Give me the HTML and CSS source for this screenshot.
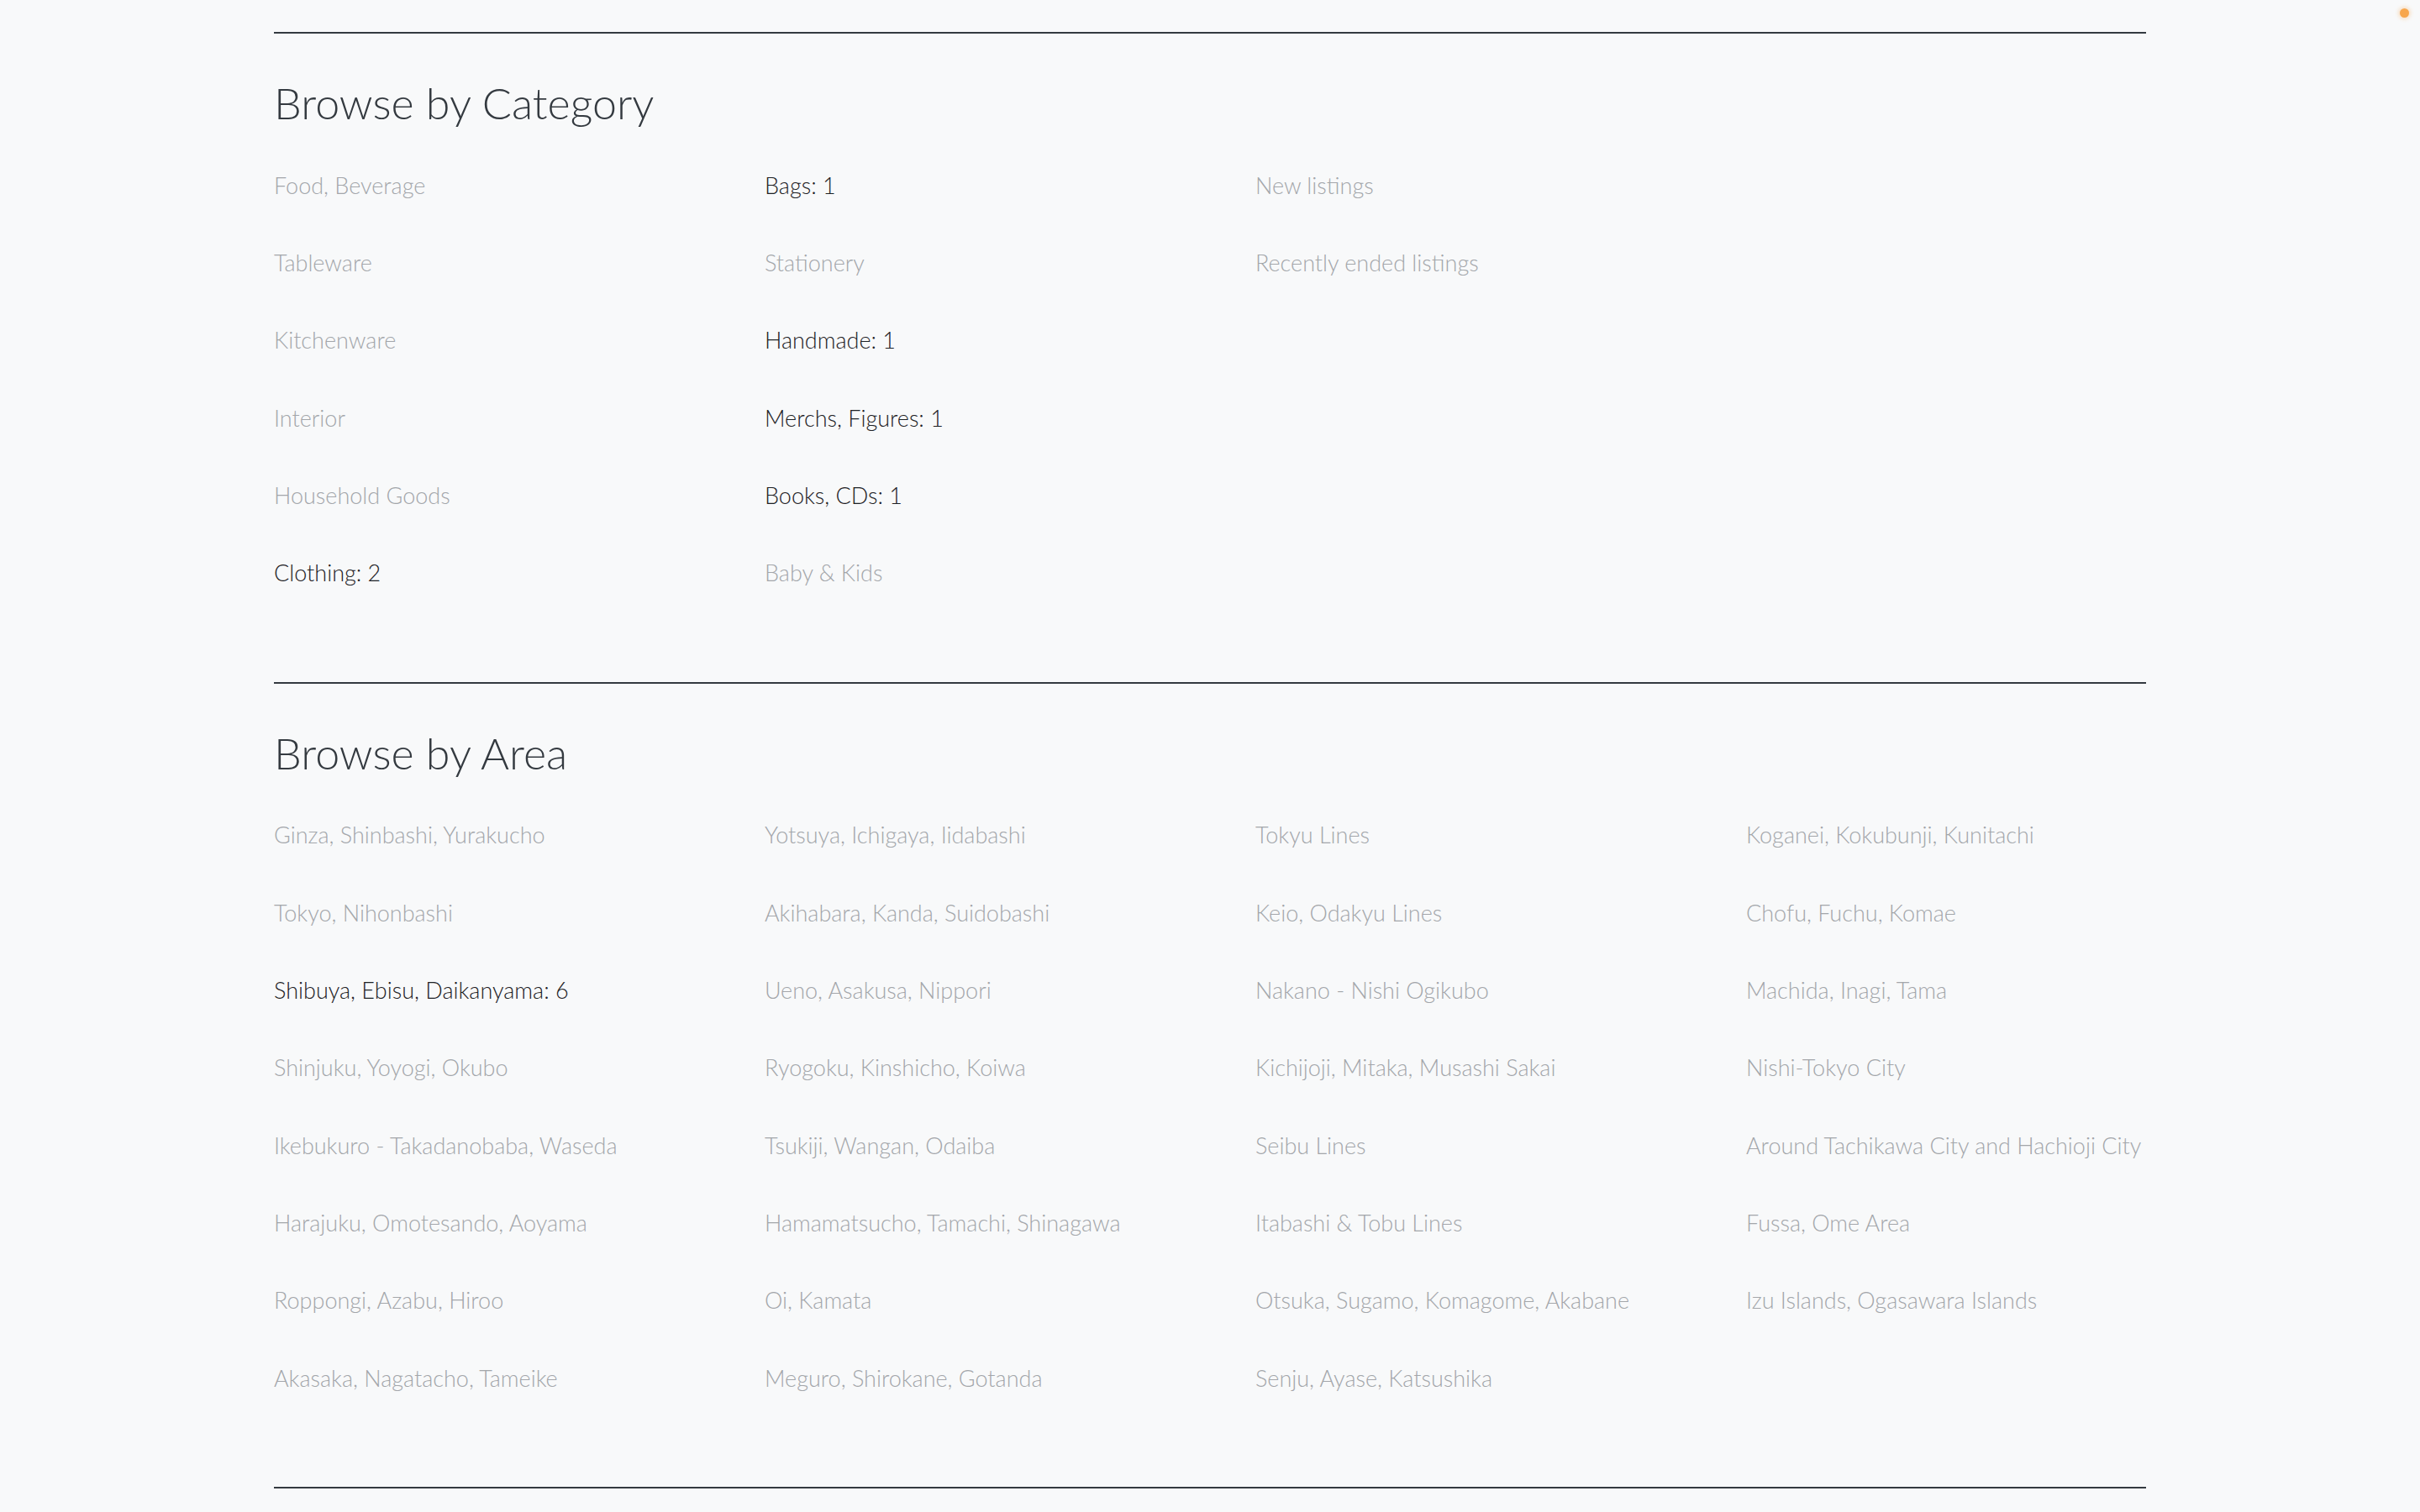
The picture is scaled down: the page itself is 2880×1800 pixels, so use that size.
FILE: index.html
```html
<!DOCTYPE html>
<html lang="en">
<head>
  <meta charset="UTF-8" />
  <meta name="viewport" content="width=device-width, initial-scale=1" />
  <title>Browse</title>
  <link rel="stylesheet" href="styles.css">
</head>
<body>
  <span class="status-dot"></span>
  <div class="container">

    <section class="browse">
      <h2>Browse by Category</h2>
      <div class="browse-grid">
        <ul>
          <li><a href="#">Food, Beverage</a></li>
          <li><a href="#">Tableware</a></li>
          <li><a href="#">Kitchenware</a></li>
          <li><a href="#">Interior</a></li>
          <li><a href="#">Household Goods</a></li>
          <li><a href="#" class="has-items">Clothing: 2</a></li>
        </ul>
        <ul>
          <li><a href="#" class="has-items">Bags: 1</a></li>
          <li><a href="#">Stationery</a></li>
          <li><a href="#" class="has-items">Handmade: 1</a></li>
          <li><a href="#" class="has-items">Merchs, Figures: 1</a></li>
          <li><a href="#" class="has-items">Books, CDs: 1</a></li>
          <li><a href="#">Baby &amp; Kids</a></li>
        </ul>
        <ul>
          <li><a href="#">New listings</a></li>
          <li><a href="#">Recently ended listings</a></li>
        </ul>
      </div>
    </section>

    <section class="browse">
      <h2>Browse by Area</h2>
      <div class="browse-grid">
        <ul>
          <li><a href="#">Ginza, Shinbashi, Yurakucho</a></li>
          <li><a href="#">Tokyo, Nihonbashi</a></li>
          <li><a href="#" class="has-items">Shibuya, Ebisu, Daikanyama: 6</a></li>
          <li><a href="#">Shinjuku, Yoyogi, Okubo</a></li>
          <li><a href="#">Ikebukuro - Takadanobaba, Waseda</a></li>
          <li><a href="#">Harajuku, Omotesando, Aoyama</a></li>
          <li><a href="#">Roppongi, Azabu, Hiroo</a></li>
          <li><a href="#">Akasaka, Nagatacho, Tameike</a></li>
        </ul>
        <ul>
          <li><a href="#">Yotsuya, Ichigaya, Iidabashi</a></li>
          <li><a href="#">Akihabara, Kanda, Suidobashi</a></li>
          <li><a href="#">Ueno, Asakusa, Nippori</a></li>
          <li><a href="#">Ryogoku, Kinshicho, Koiwa</a></li>
          <li><a href="#">Tsukiji, Wangan, Odaiba</a></li>
          <li><a href="#">Hamamatsucho, Tamachi, Shinagawa</a></li>
          <li><a href="#">Oi, Kamata</a></li>
          <li><a href="#">Meguro, Shirokane, Gotanda</a></li>
        </ul>
        <ul>
          <li><a href="#">Tokyu Lines</a></li>
          <li><a href="#">Keio, Odakyu Lines</a></li>
          <li><a href="#">Nakano - Nishi Ogikubo</a></li>
          <li><a href="#">Kichijoji, Mitaka, Musashi Sakai</a></li>
          <li><a href="#">Seibu Lines</a></li>
          <li><a href="#">Itabashi &amp; Tobu Lines</a></li>
          <li><a href="#">Otsuka, Sugamo, Komagome, Akabane</a></li>
          <li><a href="#">Senju, Ayase, Katsushika</a></li>
        </ul>
        <ul>
          <li><a href="#">Koganei, Kokubunji, Kunitachi</a></li>
          <li><a href="#">Chofu, Fuchu, Komae</a></li>
          <li><a href="#">Machida, Inagi, Tama</a></li>
          <li><a href="#">Nishi-Tokyo City</a></li>
          <li><a href="#">Around Tachikawa City and Hachioji City</a></li>
          <li><a href="#">Fussa, Ome Area</a></li>
          <li><a href="#">Izu Islands, Ogasawara Islands</a></li>
        </ul>
      </div>
    </section>

    <section class="browse"></section>
  </div>
</body>
</html>
```

FILE: styles.css
```css
body {
  margin: 0;
  padding: 38px 0 0;
  background-color: #f8f9fa;
  font-family: Lato, 'Open Sans', sans-serif;
  font-weight: 300;
  color: #343a40;
}

.container {
  width: 2228px;
  margin: 0 auto;
}

.status-dot {
  position: fixed;
  top: 10px;
  right: 13px;
  width: 11px;
  height: 11px;
  border-radius: 50%;
  background-color: #f7a64c;
  box-shadow: 0 0 4px 2px rgba(247, 166, 76, 0.3);
}

.browse {
  border-top: 2px solid #343a40;
  padding: 51px 0 83px;
}

.browse h2 {
  margin: 0 0 21px;
  font-size: 52px;
  font-weight: 300;
  line-height: 1.2;
  color: #343a40;
}

.browse-grid {
  display: grid;
  grid-template-columns: repeat(4, minmax(0, 1fr));
  column-gap: 108px;
}

.browse-grid ul {
  list-style: none;
  margin: 0;
  padding: 0;
}

.browse-grid a {
  display: block;
  padding: 24.2px 0;
  font-size: 27px;
  line-height: 44px;
  color: #a3a6aa;
  text-decoration: none;
  white-space: nowrap;
}

.browse-grid a.has-items {
  color: #1d2125;
}
```
